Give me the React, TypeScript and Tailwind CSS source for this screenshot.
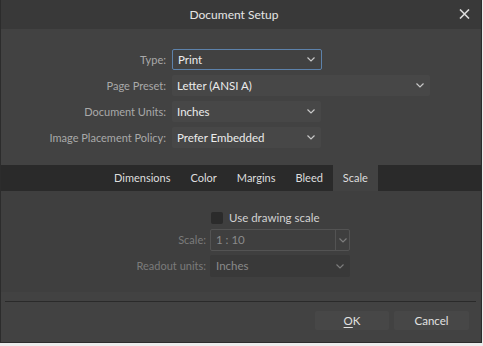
const font = { fontFamily: 'Lato, "Noto Sans", sans-serif' };

function Chevron({ className = 'stroke-[#c8c8c8]' }: { className?: string }) {
    return (
        <svg width="8" height="5" viewBox="0 0 8 5" className={className} fill="none">
            <path d="M0.5 0.5 L4 4 L7.5 0.5" strokeWidth="1.2" />
        </svg>
    );
}

function Select({
    value,
    width,
    active = false,
}: {
    value: string;
    width: string;
    active?: boolean;
}) {
    return (
        <div
            className={`flex h-[21px] items-center justify-between rounded-[2px] pr-[6px] pl-[5px] ${width} ${
                active ? 'border border-[#5d82ab] bg-[#414141]' : 'bg-[#474747]'
            }`}
        >
            <span className="text-[11.5px] text-[#ececec]">{value}</span>
            <Chevron />
        </div>
    );
}

const rows = [
    { label: 'Type:', value: 'Print', width: 'w-[150px]', active: true },
    { label: 'Page Preset:', value: 'Letter (ANSI A)', width: 'w-[258px]' },
    { label: 'Document Units:', value: 'Inches', width: 'w-[149px]' },
    { label: 'Image Placement Policy:', value: 'Prefer Embedded', width: 'w-[149px]' },
];

const tabs = ['Dimensions', 'Color', 'Margins', 'Bleed', 'Scale'];

export default function App() {
    return (
        <div className="h-[346px] w-[483px] bg-[#ececec]" style={font}>
            <div className="flex h-[343px] w-[482px] flex-col border border-t-0 border-[#2c2c2c] bg-[#424242]">
                {/* title bar */}
                <div className="relative flex h-[29px] shrink-0 items-center justify-center bg-[#393939] pr-[14px]">
                    <span className="text-[12px] text-[#e6e6e6]">Document Setup</span>
                    <svg
                        width="11"
                        height="10"
                        viewBox="0 0 11 10"
                        className="absolute top-[9px] right-[11px] stroke-[#dcdcdc]"
                    >
                        <path d="M1 0.5 L10 9.5 M10 0.5 L1 9.5" strokeWidth="1.6" />
                    </svg>
                </div>

                {/* general settings */}
                <div className="flex flex-col gap-[5px] pt-[20px] pb-[17px]">
                    {rows.map((row) => (
                        <div key={row.label} className="flex h-[21px] items-center">
                            <span className="w-[166px] shrink-0 pr-[1px] text-right text-[11px] leading-none text-[#a9a9a9]">
                                {row.label}
                            </span>
                            <div className="ml-[5px]">
                                <Select value={row.value} width={row.width} active={row.active} />
                            </div>
                        </div>
                    ))}
                </div>

                {/* tabs */}
                <div className="flex h-[26px] shrink-0 justify-center bg-[#2a2a2a]">
                    {tabs.map((tab) => (
                        <div
                            key={tab}
                            className={`flex items-center px-[10px] text-[11px] text-[#dedede] ${
                                tab === 'Scale' ? 'bg-[#424242]' : ''
                            }`}
                        >
                            {tab}
                        </div>
                    ))}
                </div>

                {/* scale page */}
                <div className="flex h-[101px] shrink-0 flex-col bg-[#3f3f3f] pt-[21px]">
                    <div className="flex h-[12px] items-center pl-[210px]">
                        <div className="h-[12px] w-[12px] rounded-[2px] bg-[#2b2b2b]" />
                        <span className="ml-[6px] text-[11.5px] text-[#d2d2d2]">Use drawing scale</span>
                    </div>
                    <div className="mt-[5px] flex items-center">
                        <span className="w-[205px] shrink-0 text-right text-[11px] text-[#7b7b7b]">Scale:</span>
                        <div className="ml-[4px] flex h-[22px] w-[140px] rounded-[2px] border border-[#535353] bg-[#3f3f3f]">
                            <span className="flex flex-1 items-center pl-[5px] text-[11.5px] text-[#8a8a8a]">1 : 10</span>
                            <div className="flex w-[14px] items-center justify-center border-l border-[#535353]">
                                <Chevron className="stroke-[#7c7c7c]" />
                            </div>
                        </div>
                    </div>
                    <div className="mt-[4px] flex items-center">
                        <span className="w-[205px] shrink-0 text-right text-[11px] text-[#7b7b7b]">
                            Readout units:
                        </span>
                        <div className="ml-[4px] flex h-[22px] w-[140px] items-center justify-between rounded-[2px] bg-[#393939] pr-[6px] pl-[6px]">
                            <span className="text-[11.5px] text-[#8a8a8a]">Inches</span>
                            <Chevron className="stroke-[#7c7c7c]" />
                        </div>
                    </div>
                </div>

                {/* footer */}
                <div className="flex flex-1 flex-col px-[4px] pt-[9px]">
                    <div className="mr-[1px] h-[1px] bg-[#2a2a2a]" />
                    <div className="flex justify-end gap-[5px] pt-[9px] pr-[8px]">
                        <button className="h-[19px] w-[74px] rounded-[2px] bg-[#474747] text-[11.5px] text-[#e2e2e2]">
                            <span className="underline underline-offset-2">O</span>K
                        </button>
                        <button className="h-[19px] w-[75px] rounded-[2px] bg-[#474747] text-[11.5px] text-[#e2e2e2]">
                            Cancel
                        </button>
                    </div>
                </div>
            </div>
        </div>
    );
}
